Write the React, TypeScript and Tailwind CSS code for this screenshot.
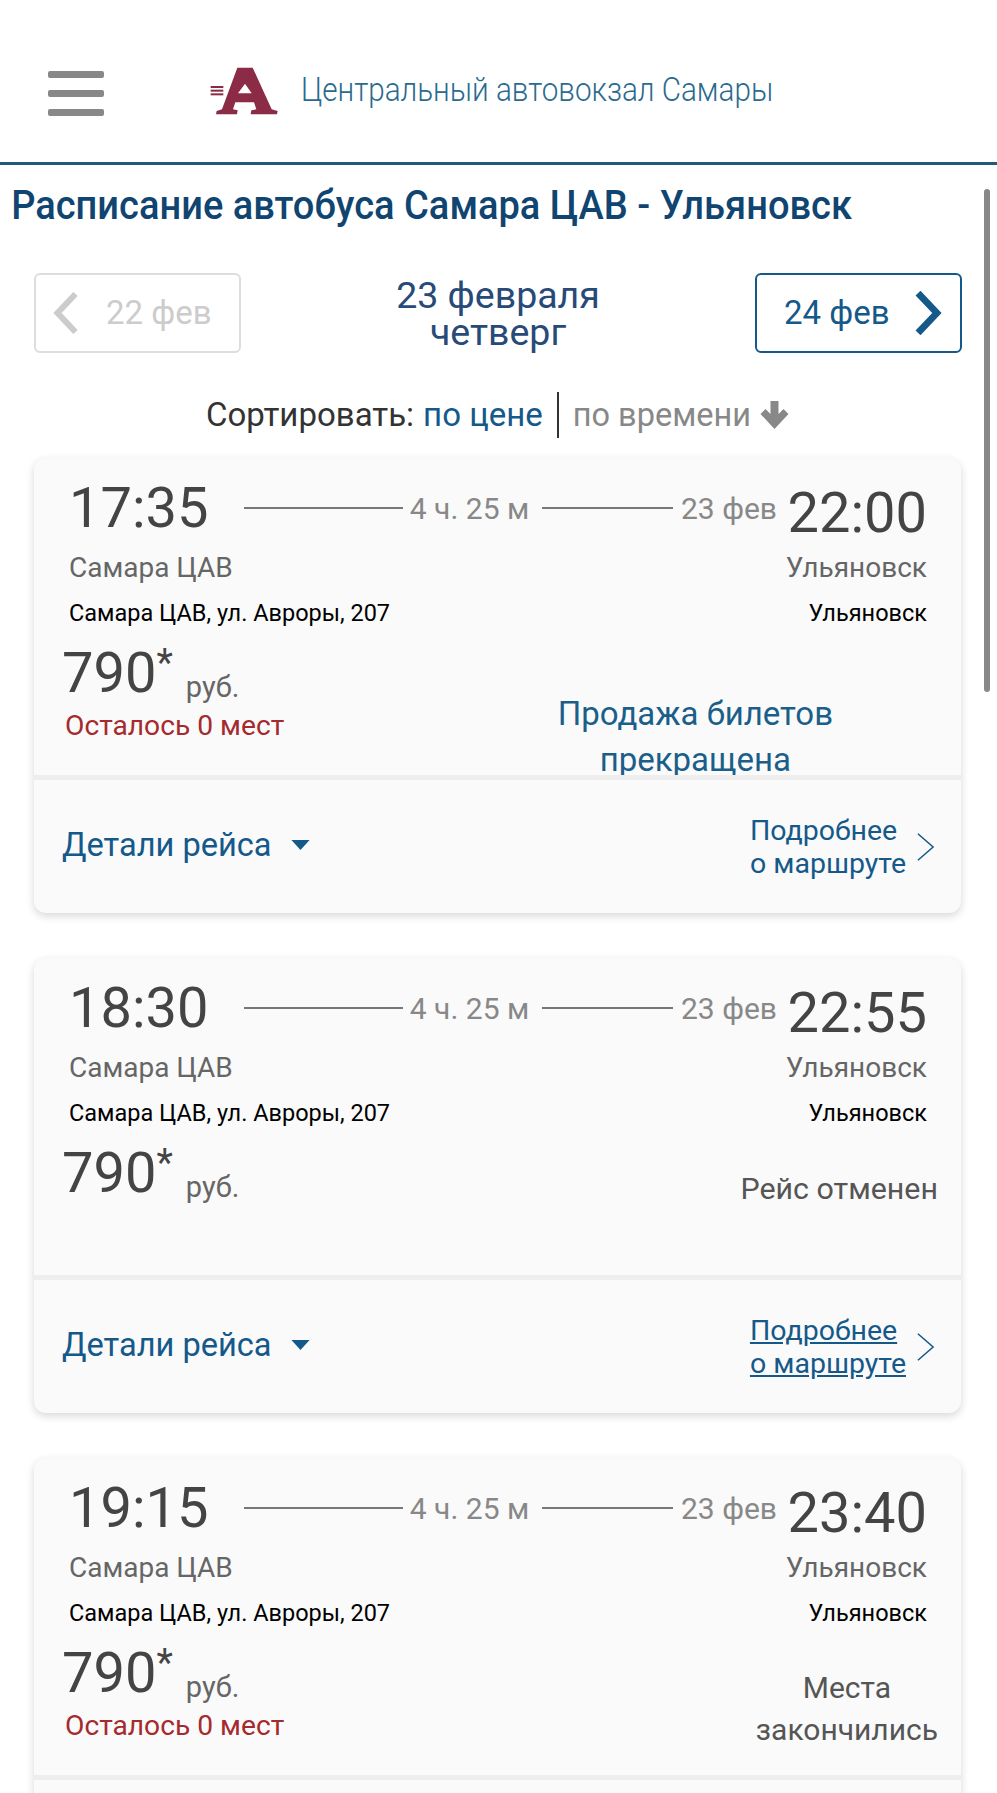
const rb = "font-['Roboto','Liberation_Sans',sans-serif]";

function Logo() {
  return (
    <svg viewBox="90 78 204 144" className="w-[68px] h-[48px] shrink-0" aria-label="logo">
      <path
        fillRule="evenodd"
        fill="#8c2b45"
        d="M172 80 L218 80 L275 205 L293 210 L291 220 L212 220 L214 208 L229 205 L222 184 L166 184 L159 205 L173 208 L171 220 L108 220 L110 210 L126 205 Z M195 128 L215 157 L174 157 Z"
      />
      <rect x="92" y="135" width="38" height="6" fill="#8c2b45" />
      <rect x="92" y="146" width="38" height="6" fill="#8c2b45" />
      <rect x="92" y="157" width="38" height="6" fill="#8c2b45" />
    </svg>
  );
}

function Card({
  from,
  to,
  seats,
  underline,
  status,
}: {
  from: string;
  to: string;
  seats: boolean;
  underline: boolean;
  status: React.ReactNode;
}) {
  return (
    <div className="ml-[34px] w-[927px] h-[455px] mb-[45px] shrink-0 rounded-[12px] bg-[#fafafa] shadow-[0_3px_8px_rgba(0,0,0,0.16)] flex flex-col">
      <div className="h-[317px] shrink-0 pt-[19px]">
        <div className="flex items-start pl-[35px] pr-[34px]">
          <span className="text-[56px] leading-[62px] text-[#444] w-[175px] shrink-0">{from}</span>
          <div className="flex items-center h-[62px] text-[30px] text-[#888] shrink-0">
            <span className="block w-[159px] h-[2px] bg-[#777]" />
            <span className="ml-[5px] mr-[11px] w-[123px] text-center whitespace-nowrap">4 ч. 25 м</span>
            <span className="block w-[131px] h-[2px] bg-[#777]" />
            <span className="ml-[8px] whitespace-nowrap">23 фев</span>
          </div>
          <span className="text-[56px] leading-[62px] mt-[5px] text-[#444] ml-auto">{to}</span>
        </div>
        <div className="flex justify-between pl-[35px] pr-[34px] mt-[7px] text-[28px] leading-[34px] text-[#666]">
          <span>Самара ЦАВ</span>
          <span>Ульяновск</span>
        </div>
        <div className="flex justify-between pl-[35px] pr-[34px] mt-[13px] text-[23.5px] leading-[30px] text-black">
          <span>Самара ЦАВ, ул. Авроры, 207</span>
          <span>Ульяновск</span>
        </div>
        <div className="flex justify-between items-start mt-[14px]">
          <div className="pl-[28px]">
            <div className="flex items-start h-[62px] text-[#444]">
              <span className="text-[56px] leading-[62px]">790</span>
              <span className="text-[38px] leading-[38px] mt-[2px]">*</span>
              <span className="text-[29px] leading-[34px] text-[#666] ml-[13px] mt-[28px]">руб.</span>
            </div>
            <div className="mt-[6px] ml-[3px] text-[28.2px] leading-[32px] text-[#a52a2e]">{seats ? "Осталось 0 мест" : ""}</div>
          </div>
          {status}
        </div>
      </div>
      <div className="flex-1 border-t-[5px] border-[#eeeeee] flex items-center justify-between pl-[28px] pr-[26px]">
        <div className="flex items-center text-[32.6px] text-[#14598a] -mt-[2px]">
          <span>Детали рейса</span>
          <svg viewBox="0 0 20 11" className="w-[19px] h-[10px] ml-[19px]">
            <path d="M0 0 H20 L10 11 Z" fill="#14598a" />
          </svg>
        </div>
        <div className="flex items-center">
          <div className={`text-[28.5px] leading-[33px] text-[#14598a] ${underline ? "underline" : ""}`}>
            Подробнее
            <br />о маршруте
          </div>
          <svg viewBox="0 0 20 30" className="w-[19px] h-[30px] ml-[10px]" fill="none" stroke="#14598a" strokeWidth="1.6">
            <path d="M2 1 L18 15 L2 29" />
          </svg>
        </div>
      </div>
    </div>
  );
}

export default function App() {
  return (
    <div className={`${rb} relative w-[997px] h-[1793px] overflow-hidden bg-white`}>
      <header className="h-[165px] border-b-[3px] border-[#1d5a7e] flex items-center pl-[48px] pt-[24px]">
        <div className="flex flex-col gap-[12px] w-[56px] mt-[1px]">
          <span className="block h-[7px] rounded-[2px] bg-[#888]" />
          <span className="block h-[7px] rounded-[2px] bg-[#888]" />
          <span className="block h-[7px] rounded-[2px] bg-[#888]" />
        </div>
        <div className="ml-[106px] mb-[5px]">
          <Logo />
        </div>
        <span className="ml-[23px] mb-[5px] text-[32.5px] font-light text-[#2a6a8e] whitespace-nowrap origin-left scale-x-[0.912]">
          Центральный автовокзал Самары
        </span>
      </header>
      <h1 className="pl-[12px] mt-[15px] text-[41px] leading-[50px] font-medium text-[#0f4570] whitespace-nowrap origin-left scale-x-[0.928]">
        Расписание автобуса Самара ЦАВ - Ульяновск
      </h1>
      <div className="flex items-center justify-between pl-[34px] pr-[35px] mt-[43px]">
        <div className="w-[207px] h-[80px] rounded-[6px] border-2 border-[#dddddd] flex items-center pl-[16px] gap-[27px] text-[33px] text-[#cccccc]">
          <svg viewBox="0 0 26 42" className="w-[27px] h-[42px]" fill="none" stroke="#cccccc" strokeWidth="6">
            <path d="M23 2 L5 21 L23 40" />
          </svg>
          <span>22 фев</span>
        </div>
        <div className="text-center text-[37.5px] leading-[37px] text-[#274a78] pt-[2px]">
          23 февраля
          <br />
          четверг
        </div>
        <div className="w-[207px] h-[80px] rounded-[6px] border-2 border-[#15598a] flex items-center pl-[27px] gap-[24px] text-[33px] text-[#15598a]">
          <span>24 фев</span>
          <svg viewBox="0 0 26 42" className="w-[29px] h-[44px]" fill="none" stroke="#15598a" strokeWidth="6.5">
            <path d="M3 2 L21 21 L3 40" />
          </svg>
        </div>
      </div>
      <div className="flex items-center justify-center h-[46px] mt-[39px] mb-[20px] text-[32.5px] pr-[2px]">
        <span className="text-[#333] text-[33px]">Сортировать:</span>
        <span className="ml-[9px] text-[#14598a] text-[33px]">по цене</span>
        <span className="block w-[2px] h-[46px] bg-[#333] mx-[14px]" />
        <span className="text-[#888]">по времени</span>
        <svg viewBox="0 0 28 30" className="w-[29px] h-[30px] ml-[9px]">
          <path d="M10 1 H18 V14 L23 9 L28 14 L14 29 L0 14 L5 9 L10 14 Z" fill="#888" />
        </svg>
      </div>
      <div className="flex flex-col">
        <Card
          from="17:35"
          to="22:00"
          seats
          underline={false}
          status={
            <div className="mr-[128px] mt-[49px] text-center text-[33px] leading-[46px] text-[#1a5f8a]">
              Продажа билетов
              <br />
              прекращена
            </div>
          }
        />
        <Card
          from="18:30"
          to="22:55"
          seats={false}
          underline
          status={<div className="mr-[23px] mt-[25px] text-[30.4px] leading-[44px] text-[#555]">Рейс отменен</div>}
        />
        <Card
          from="19:15"
          to="23:40"
          seats
          underline={false}
          status={
            <div className="mr-[23px] mt-[25px] text-center text-[30px] leading-[42px] text-[#555]">
              Места
              <br />
              закончились
            </div>
          }
        />
      </div>
      <div className="absolute left-[984px] top-[189px] w-[6px] h-[503px] rounded-full bg-[#888]" />
    </div>
  );
}
